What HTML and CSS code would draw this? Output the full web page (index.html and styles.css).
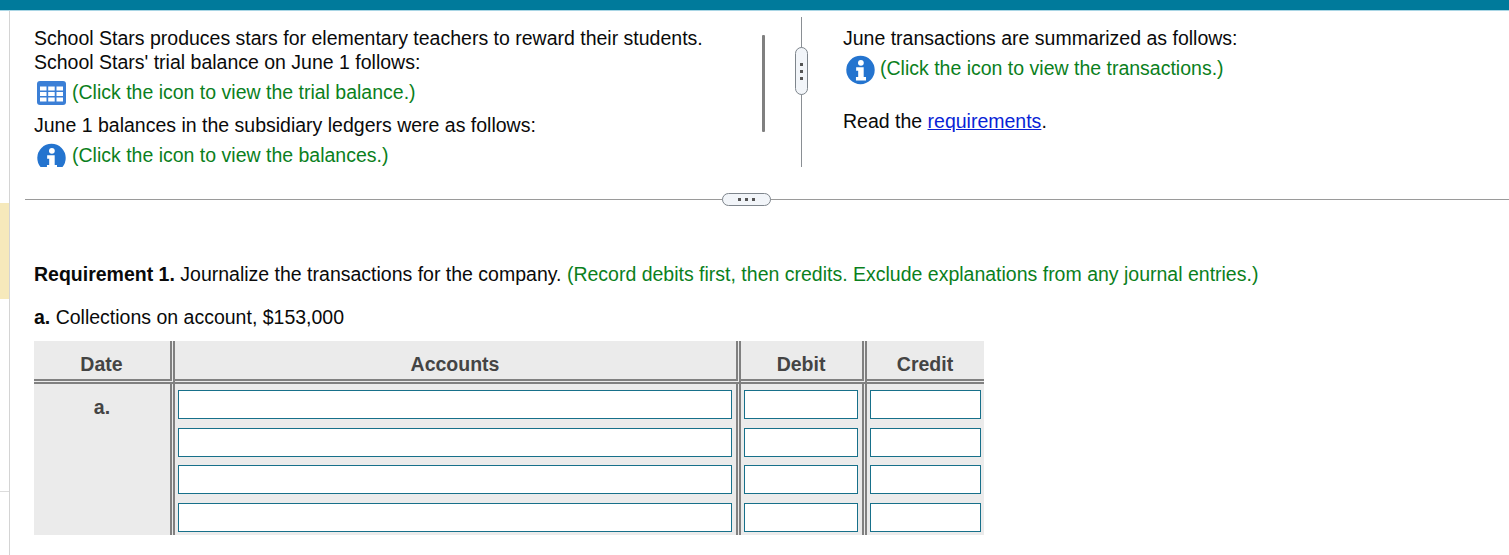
FILE: index.html
```html
<!DOCTYPE html>
<html lang="en">
<head>
<meta charset="utf-8">
<title>Requirement 1</title>
<link rel="stylesheet" href="styles.css">
</head>
<body>
<div class="topbar"></div>
<div class="shell">
  <aside class="rail">
    <div class="rail-mark"></div>
    <div class="rail-line"></div>
  </aside>
  <main class="content">
    <section class="panes">
      <div class="pane-left">
        <div class="intro">
          <p class="line">School Stars produces stars for elementary teachers to reward their students.</p>
          <p class="line">School Stars' trial balance on June 1 follows:</p>
          <p class="icon-line first">
            <svg class="icon" viewBox="0 0 29 24" aria-hidden="true"><rect width="29" height="24" rx="3" fill="#3b7fd6"/><g fill="#fff"><rect x="3" y="5.5" width="6.5" height="4"/><rect x="11.2" y="5.5" width="6.5" height="4"/><rect x="19.5" y="5.5" width="6.5" height="4"/><rect x="3" y="11" width="6.5" height="4"/><rect x="11.2" y="11" width="6.5" height="4"/><rect x="19.5" y="11" width="6.5" height="4"/><rect x="3" y="16.5" width="6.5" height="4"/><rect x="11.2" y="16.5" width="6.5" height="4"/><rect x="19.5" y="16.5" width="6.5" height="4"/></g></svg>
            <span class="hint">(Click the icon to view the trial balance.)</span>
          </p>
          <p class="line after-icon">June 1 balances in the subsidiary ledgers were as follows:</p>
          <p class="icon-line second">
            <svg class="icon info" viewBox="0 0 30 30" aria-hidden="true"><circle cx="15" cy="15" r="14.7" fill="#2474cf"/><g fill="#fff"><circle cx="15.4" cy="7.6" r="3"/><path d="M10.5 12.2h7.8v10h2.4v3.6h-10.4v-3.6h2.3v-6.4h-2.1z"/></g></svg>
            <span class="hint">(Click the icon to view the balances.)</span>
          </p>
        </div>
        <div class="thick-bar"></div>
      </div>
      <div class="pane-right">
        <div class="v-handle"><i></i><i></i><i></i></div>
        <p class="line">June transactions are summarized as follows:</p>
        <p class="icon-line third">
          <svg class="icon info" viewBox="0 0 30 30" aria-hidden="true"><circle cx="15" cy="15" r="14.7" fill="#2474cf"/><g fill="#fff"><circle cx="15.4" cy="7.6" r="3"/><path d="M10.5 12.2h7.8v10h2.4v3.6h-10.4v-3.6h2.3v-6.4h-2.1z"/></g></svg>
          <span class="hint">(Click the icon to view the transactions.)</span>
        </p>
        <p class="line read">Read the <a class="link" href="#">requirements</a>.</p>
      </div>
    </section>

    <div class="divider"><div class="h-handle"><i></i><i></i><i></i></div></div>

    <p class="req"><b>Requirement 1.</b> Journalize the transactions for the company. <span class="hint">(Record debits first, then credits. Exclude explanations from any journal entries.)</span></p>
    <p class="txn"><b>a.</b> Collections on account, $153,000</p>

    <table class="journal">
      <colgroup><col class="c-date"><col class="c-acct"><col class="c-debit"><col class="c-credit"></colgroup>
      <thead>
        <tr><th>Date</th><th>Accounts</th><th>Debit</th><th>Credit</th></tr>
      </thead>
      <tbody>
        <tr class="r1">
          <td class="date" rowspan="4">a.</td>
          <td><input class="field" type="text"></td><td><input class="field" type="text"></td><td><input class="field" type="text"></td>
        </tr>
        <tr class="r2">
          <td><input class="field" type="text"></td><td><input class="field" type="text"></td><td><input class="field" type="text"></td>
        </tr>
        <tr class="r3">
          <td><input class="field" type="text"></td><td><input class="field" type="text"></td><td><input class="field" type="text"></td>
        </tr>
        <tr class="r4">
          <td><input class="field" type="text"></td><td><input class="field" type="text"></td><td><input class="field" type="text"></td>
        </tr>
      </tbody>
    </table>
  </main>
</div>
</body>
</html>
```
FILE: styles.css
```css
* { box-sizing: border-box; }
html, body { margin: 0; padding: 0; height: 100%; overflow: hidden; background: #fff; }
body { font-family: "Liberation Sans", Arial, sans-serif; font-size: 19.5px; line-height: 24px; color: #0a0a0a; }
p { margin: 0; }

.topbar { height: 11px; background: #007a9b; border-bottom: 1px solid #a9d6e5; }

.shell { display: flex; height: 544px; }
.rail { flex: 0 0 10px; border-right: 1px solid #d4d4d4; padding-top: 192px; }
.rail-mark { height: 96px; background: #f6e9bb; }
.rail-line { height: 1px; margin-top: 192px; background: #dcdcdc; }

.content { flex: 1; min-width: 0; padding-left: 24px; }

.panes { display: flex; height: 150px; margin-top: 6px; }
.pane-left { flex: 0 0 767px; display: flex; padding-top: 9px; overflow: hidden; }
.intro { flex: 0 0 728px; }
.thick-bar { flex: 0 0 3px; height: 97px; margin-top: 9px; background: #808080; border-radius: 1px; }

.pane-right { position: relative; flex: 1; padding: 9px 0 0 41px; border-left: 1px solid #8a8f94; }

.icon-line { display: flex; align-items: flex-start; height: 24px; margin-top: 6px; margin-left: 3px; gap: 6px; }
.after-icon { margin-top: 9px; }
.icon { flex: 0 0 29px; width: 29px; height: 24px; }
.first .icon { margin-top: 1px; }
.icon.info { height: 30px; }
.third { gap: 5px; }
.third .icon { margin-top: -1px; }
.read { margin-top: 29px; }
.hint { color: #0b7f1d; }
.link { color: #0a1fd6; text-decoration: underline; }

.v-handle {
  position: absolute; left: -7px; top: 30px; width: 13px; height: 48px;
  display: flex; flex-direction: column; align-items: center; justify-content: center; gap: 4px;
  background: #f2f5f9; border: 1px solid #7e858c; border-radius: 7px;
}
.v-handle i, .h-handle i { width: 3px; height: 3px; background: #555; display: block; }

.divider { position: relative; height: 1px; margin: 32px 0 0 -9px; background: #9a9a9a; }
.h-handle {
  position: absolute; left: 697px; top: -6px; width: 49px; height: 13px;
  display: flex; align-items: center; justify-content: center; gap: 4px;
  background: #f2f5f9; border: 1px solid #7e858c; border-radius: 7px;
}

.req { margin-top: 62px; }
.txn { margin-top: 19px; }

.journal { margin-top: 12px; width: 950px; table-layout: fixed; border-collapse: separate; border-spacing: 0; background: #ebebeb; }
.c-date { width: 141px; }
.c-acct { width: 566px; }
.c-debit { width: 126px; }
.c-credit { width: 117px; }
.journal th { height: 43px; padding: 7px 1px 0 0; border-bottom: 5px double #808080; border-right: 5px double #808080; font-weight: 700; color: #444; text-align: center; }
.journal th:last-child, .journal td:last-child { border-right: 0; }
.journal td { padding: 0 4px 0 3px; border-right: 5px double #808080; }
.journal td:last-child { padding-right: 3px; }
.journal td.date { padding-top: 11px; vertical-align: top; text-align: center; font-weight: 700; color: #444; padding-right: 0; padding-left: 0; }
.r1 td { height: 39px; padding-top: 6px; padding-bottom: 4px; }
.r2 td { height: 38px; padding-top: 5px; padding-bottom: 4px; }
.r3 td { height: 37px; padding-top: 4px; padding-bottom: 4px; }
.r4 td { height: 37px; padding-top: 5px; padding-bottom: 3px; }
.field { display: block; width: 100%; height: 29px; padding: 0; margin: 0; background: #fff; border: 1px solid #17708a; border-radius: 0; outline: 0; }
```
